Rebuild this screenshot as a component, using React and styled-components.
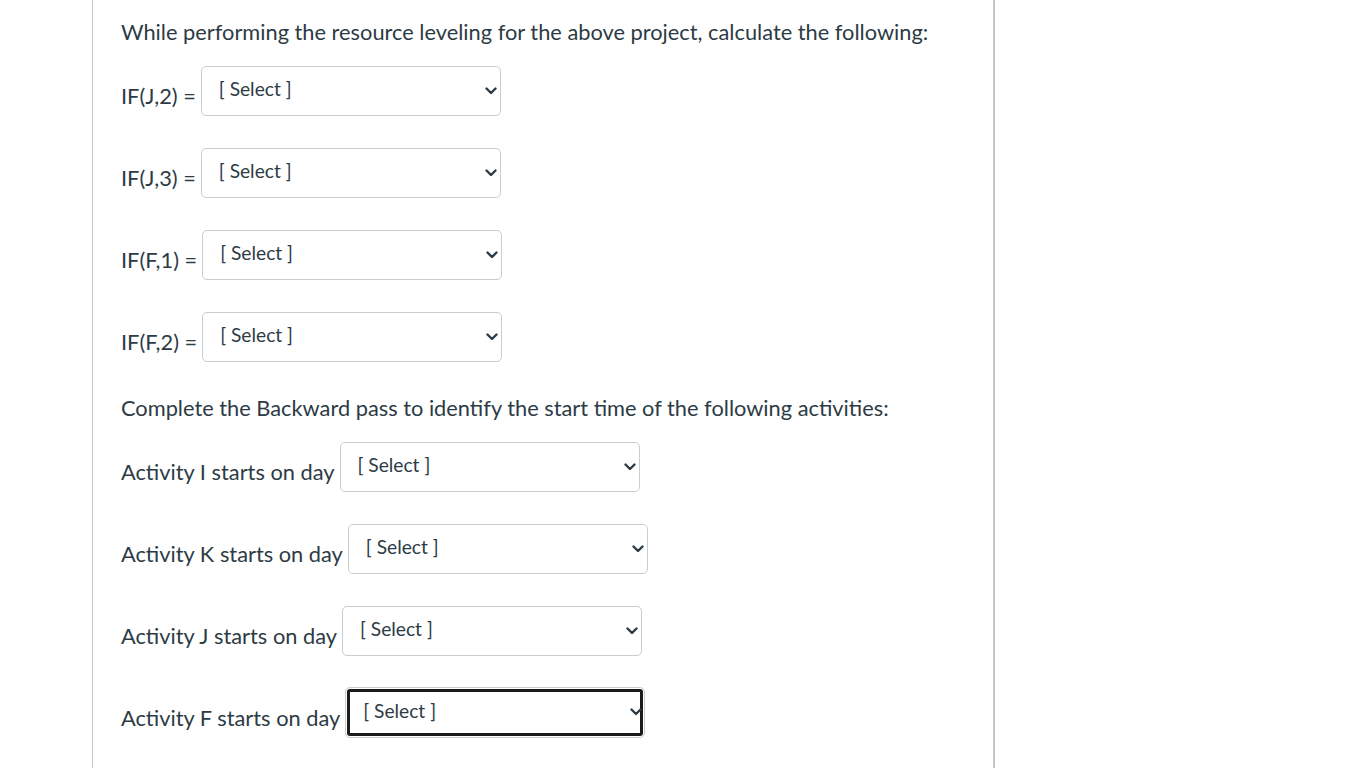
import React from "react";
import styled, { createGlobalStyle } from "styled-components";

const Global = createGlobalStyle`
  html, body { margin: 0; padding: 0; background: #ffffff; }
  body { font-family: Lato, "Noto Sans", sans-serif; color: #2d3b45; }
`;

const Panel = styled.div`
  box-sizing: border-box;
  margin-left: 92px;
  width: 903px;
  min-height: 768px;
  border-left: 1px solid #c4c4c4;
  border-right: 2px solid #c4c4c4;
  padding: 16px 0 0 28px;
`;

const Section = styled.section`
  display: flex;
  flex-direction: column;
  gap: 32px;
  & + & { margin-top: 30px; }
`;

const Prompt = styled.p`
  margin: 0 0 -13px 0;
  font-size: 21.8px;
  line-height: 31px;
`;

const Row = styled.div`
  display: flex;
  align-items: flex-start;
  gap: 5px;
`;

const Label = styled.span`
  font-size: 21.8px;
  line-height: 31px;
  padding-top: 14px;
  white-space: nowrap;
`;

const Field = styled.div`
  position: relative;
  width: 300px;
  height: ${(p) => (p.$focused ? "51px" : "50px")};
  margin-top: ${(p) => (p.$focused ? "-1px" : "0")};
  flex: none;
`;

const Select = styled.select`
  appearance: none;
  -webkit-appearance: none;
  box-sizing: border-box;
  width: 100%;
  height: 100%;
  padding: 0 30px 5px 17px;
  border: 1px solid #c7cdd1;
  border-radius: 5px;
  background: #ffffff;
  color: #2d3b45;
  font-family: Lato, "Noto Sans", sans-serif;
  font-size: 19.2px;
  outline: ${(p) => (p.$focused ? "3px solid #1b1b1b" : "none")};
  outline-offset: -5px;
`;

const Chevron = styled.svg`
  position: absolute;
  right: ${(p) => (p.$focused ? "3px" : "4px")};
  top: 21px;
  width: 12px;
  height: 8px;
  pointer-events: none;
`;

const Options = () => (
  <>
    <option>[ Select ]</option>
    <option>0</option>
    <option>1</option>
    <option>2</option>
  </>
);

const Dropdown = ({ focused }) => (
  <Field $focused={focused}>
    <Select defaultValue="[ Select ]" $focused={focused}>
      <Options />
    </Select>
    <Chevron $focused={focused} viewBox="0 0 12 8">
      <path d="M1.5 1.5 L6 6 L10.5 1.5" fill="none" stroke="#2d3b45" strokeWidth="2.4" strokeLinecap="round" strokeLinejoin="round" />
    </Chevron>
  </Field>
);

const first = ["IF(J,2) =", "IF(J,3) =", "IF(F,1) =", "IF(F,2) ="];
const second = [
  "Activity I starts on day",
  "Activity K starts on day",
  "Activity J starts on day",
  "Activity F starts on day",
];

export default function App() {
  return (
    <>
      <Global />
      <Panel>
        <Section>
          <Prompt>
            While performing the resource leveling for the above project, calculate the following:
          </Prompt>
          {first.map((l) => (
            <Row key={l}>
              <Label>{l}</Label>
              <Dropdown />
            </Row>
          ))}
        </Section>
        <Section>
          <Prompt>
            Complete the Backward pass to identify the start time of the following activities:
          </Prompt>
          {second.map((l, i) => (
            <Row key={l}>
              <Label>{l}</Label>
              <Dropdown focused={i === 3} />
            </Row>
          ))}
        </Section>
      </Panel>
    </>
  );
}
